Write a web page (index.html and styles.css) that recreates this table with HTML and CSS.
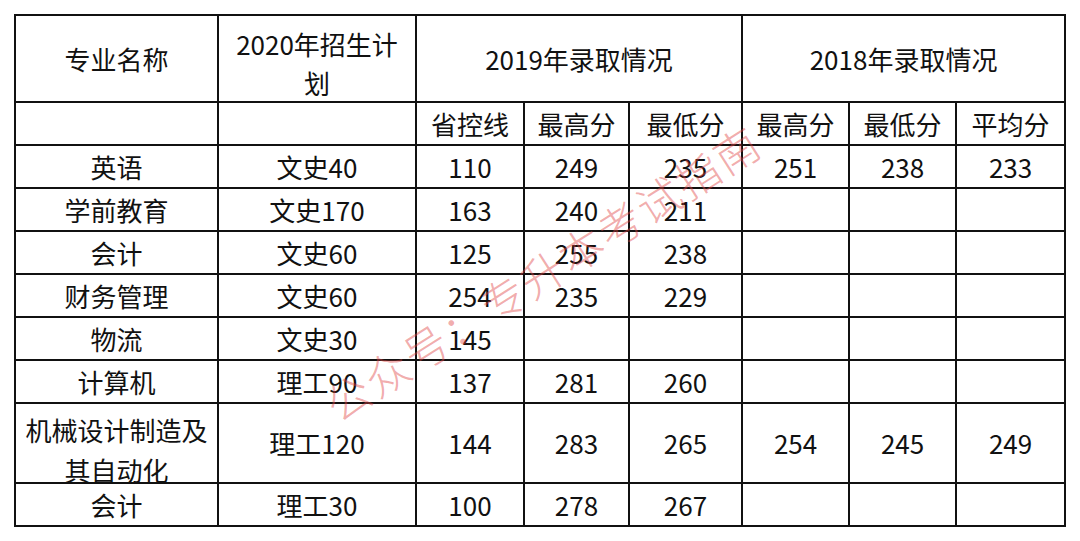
FILE: index.html
```html
<!DOCTYPE html>
<html lang="zh-CN">
<head>
<meta charset="utf-8">
<title>录取情况</title>
<link rel="stylesheet" href="styles.css">
</head>
<body>
<div class="page">
  <table class="score-table">
    <colgroup>
      <col class="c-name">
      <col class="c-plan">
      <col class="c-ctrl">
      <col class="c-hi19">
      <col class="c-lo19">
      <col class="c-hi18">
      <col class="c-lo18">
      <col class="c-avg18">
    </colgroup>
    <tr class="r-head">
      <td>专业名称</td>
      <td><div class="plan-head">2020年招生计划</div></td>
      <td colspan="3">2019年录取情况</td>
      <td colspan="3">2018年录取情况</td>
    </tr>
    <tr class="r-sub">
      <td></td><td></td>
      <td>省控线</td><td>最高分</td><td>最低分</td>
      <td>最高分</td><td>最低分</td><td>平均分</td>
    </tr>
    <tr class="r"><td>英语</td><td>文史40</td><td>110</td><td>249</td><td>235</td><td>251</td><td>238</td><td>233</td></tr>
    <tr class="r"><td>学前教育</td><td>文史170</td><td>163</td><td>240</td><td>211</td><td></td><td></td><td></td></tr>
    <tr class="r"><td>会计</td><td>文史60</td><td>125</td><td>255</td><td>238</td><td></td><td></td><td></td></tr>
    <tr class="r"><td>财务管理</td><td>文史60</td><td>254</td><td>235</td><td>229</td><td></td><td></td><td></td></tr>
    <tr class="r"><td>物流</td><td>文史30</td><td>145</td><td></td><td></td><td></td><td></td><td></td></tr>
    <tr class="r"><td>计算机</td><td>理工90</td><td>137</td><td>281</td><td>260</td><td></td><td></td><td></td></tr>
    <tr class="r-tall"><td><div class="two-line">机械设计制造及其自动化</div></td><td>理工120</td><td>144</td><td>283</td><td>265</td><td>254</td><td>245</td><td>249</td></tr>
    <tr class="r"><td>会计</td><td>理工30</td><td>100</td><td>278</td><td>267</td><td></td><td></td><td></td></tr>
  </table>
  <div class="watermark">公众号：专升本考试指南</div>
</div>
</body>
</html>
```
FILE: styles.css
```css
html, body {
  margin: 0;
  padding: 0;
  background: #ffffff;
}

.page {
  position: relative;
  width: 1080px;
  height: 541px;
  padding: 14px 0 0 14px;
  box-sizing: border-box;
  overflow: hidden;
}

.score-table {
  border-collapse: collapse;
  table-layout: fixed;
  width: 1052px;
  font-family: "Noto Sans CJK SC", "Noto Sans", sans-serif;
  font-size: 26px;
  line-height: 36px;
  color: #111;
}

.score-table td {
  border: 2px solid #111;
  padding: 0 6px;
  text-align: center;
  vertical-align: middle;
  overflow: visible;
}

.c-name { width: 203px; }
.c-plan { width: 198px; }
.c-ctrl { width: 108px; }
.c-hi19 { width: 105px; }
.c-lo19 { width: 113px; }
.c-hi18 { width: 107px; }
.c-lo18 { width: 107px; }
.c-avg18 { width: 109px; }

.r-head td { height: 87px; box-sizing: border-box; }
.r-sub td { height: 43px; box-sizing: border-box; }
.r td { height: 43px; box-sizing: border-box; }
.r-tall td { height: 80px; box-sizing: border-box; }

.plan-head {
  height: 81px;
  line-height: 39px;
  padding-top: 6px;
  box-sizing: border-box;
  overflow: visible;
}

.two-line {
  height: 75px;
  line-height: 40px;
  padding-top: 4px;
  box-sizing: border-box;
  overflow: visible;
}

.watermark {
  position: absolute;
  left: 542px;
  top: 272px;
  transform: translate(-50%, -50%) rotate(-32.5deg);
  font-family: "Noto Sans CJK SC", sans-serif;
  font-size: 44px;
  font-weight: 300;
  letter-spacing: 2px;
  white-space: nowrap;
  color: rgba(225, 70, 70, 0.45);
  pointer-events: none;
}
```
